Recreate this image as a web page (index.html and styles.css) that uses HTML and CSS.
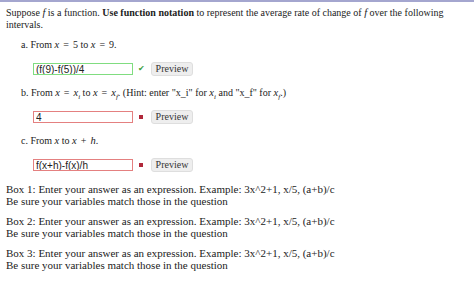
FILE: index.html
```html
<!DOCTYPE html>
<html lang="en">
<head>
    <meta charset="UTF-8">
    <title>Average rate of change</title>
    <link rel="stylesheet" href="styles.css">
</head>
<body>

<div id="problem">
    <p class="intro">Suppose <i class="m">f</i> is a function. <b>Use function notation</b> to represent the average rate of change of <i class="m">f</i> over the following intervals.</p>

    <div class="part">
        <p class="label">a. From <i class="m">x</i><span class="op">=</span>5 to <i class="m">x</i><span class="op">=</span>9.</p>
        <div class="answer-row">
            <input type="text" class="answer correct" value="(f(9)-f(5))/4">
            <span class="mark ok">&#10004;</span>
            <button class="preview-btn">Preview</button>
        </div>
    </div>

    <div class="part">
        <p class="label">b. From <i class="m">x</i><span class="op">=</span><i class="m">x<sub>i</sub></i> to <i class="m">x</i><span class="op">=</span><i class="m">x<sub>f</sub></i>. (Hint: enter "x_i" for <i class="m">x<sub>i</sub></i> and "x_f" for <i class="m">x<sub>f</sub></i>.)</p>
        <div class="answer-row">
            <input type="text" class="answer incorrect" value="4">
            <span class="mark bad"></span>
            <button class="preview-btn">Preview</button>
        </div>
    </div>

    <div class="part">
        <p class="label">c. From <i class="m">x</i> to <i class="m">x</i><span class="op">+</span><i class="m">h</i>.</p>
        <div class="answer-row">
            <input type="text" class="answer incorrect" value="f(x+h)-f(x)/h">
            <span class="mark bad"></span>
            <button class="preview-btn">Preview</button>
        </div>
    </div>

    <p class="help">Box 1: Enter your answer as an expression. Example: 3x^2+1, x/5, (a+b)/c<br>Be sure your variables match those in the question</p>
    <p class="help">Box 2: Enter your answer as an expression. Example: 3x^2+1, x/5, (a+b)/c<br>Be sure your variables match those in the question</p>
    <p class="help">Box 3: Enter your answer as an expression. Example: 3x^2+1, x/5, (a+b)/c<br>Be sure your variables match those in the question</p>
</div>

</body>
</html>
```

FILE: styles.css
```css
body {
    margin: 0;
    padding: 0;
    background-color: #ffffff;
    font-family: 'Liberation Serif', 'Times New Roman', serif;
    font-size: 10px;
    line-height: 12px;
    color: #222;
}

#problem {
    border-top: 2px solid #a4a6cf;
    padding: 5px 6px;
}

p {
    margin: 0;
}

.m {
    font-style: italic;
    font-size: 10.5px;
}

.m sub {
    font-size: 7px;
    line-height: 0;
}

.op {
    margin: 0 4px;
}

.intro {
    margin-bottom: 8px;
}

.part {
    padding-left: 15px;
}

.label {
    margin-bottom: 11px;
}

.answer-row {
    display: flex;
    align-items: center;
    height: 14px;
    padding-left: 12px;
    margin-bottom: 11px;
}

.answer {
    box-sizing: border-box;
    width: 100px;
    height: 12px;
    padding: 0 2px;
    margin: 0;
    font-family: 'Liberation Sans', Arial, sans-serif;
    font-size: 10px;
    line-height: 10px;
    color: #222;
    outline: none;
}

.correct {
    border: 1px solid #80dd80;
}

.incorrect {
    border: 1px solid #e48080;
}

.mark {
    width: 8px;
    margin-left: 4px;
    text-align: center;
    font-size: 8px;
}

.ok {
    color: #3aa03a;
}

.bad::before {
    content: "";
    display: inline-block;
    width: 4px;
    height: 4px;
    background-color: #b0283a;
    vertical-align: middle;
}

.preview-btn {
    box-sizing: border-box;
    margin-left: 6px;
    width: 42px;
    height: 14px;
    padding: 0;
    font-family: 'Liberation Serif', 'Times New Roman', serif;
    font-size: 10px;
    line-height: 12px;
    color: #333;
    background-color: #eeeeee;
    border: 1px solid #dedede;
    border-radius: 3px;
}

.help {
    font-size: 11px;
}

.help + .help {
    margin-top: 8px;
}
```
